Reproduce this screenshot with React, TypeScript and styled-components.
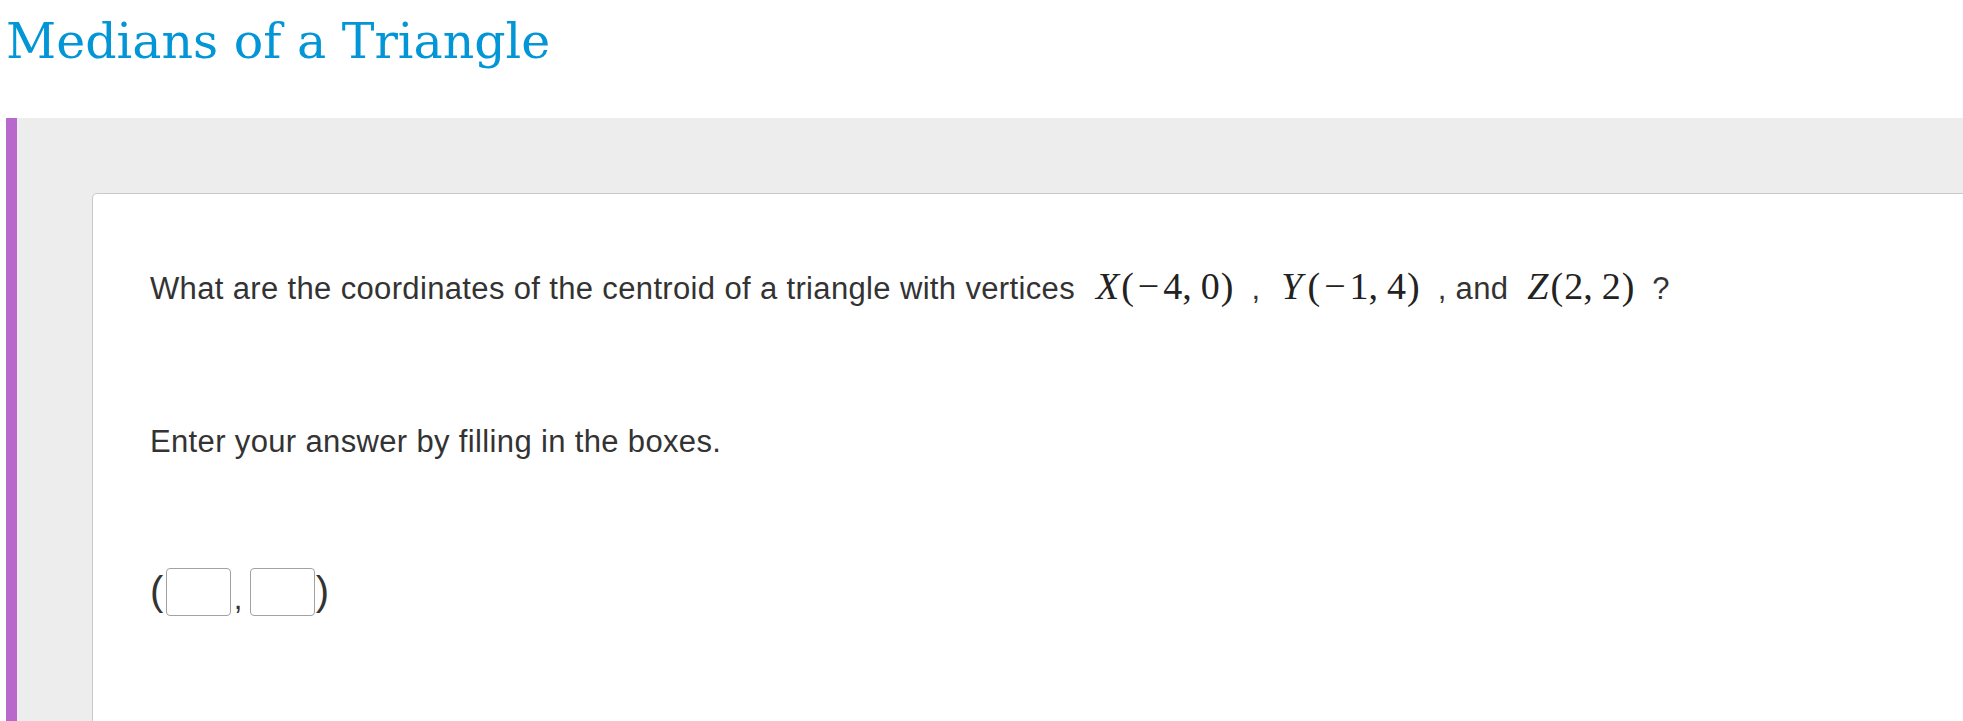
import React from 'react';
import styled, { createGlobalStyle } from 'styled-components';

const GlobalStyle = createGlobalStyle`
  html, body {
    margin: 0;
    padding: 0;
    background: #ffffff;
    overflow: hidden;
  }
`

const Page = styled.div`
  width: 100%;
  min-height: 721px;
`

const Title = styled.h1`
  margin: 0 0 41px 0;
  padding: 7px 0 0 6px;
  font-family: "DejaVu Serif", serif;
  font-weight: normal;
  font-size: 49px;
  line-height: 70px;
  color: #0396d6;
`

const Panel = styled.section`
  margin-left: 6px;
  display: flex;
  background: #ededed;
  border-left: 11px solid #b968cc;
  padding: 75px 0 0 75px;
`

const Card = styled.div`
  flex: 1;
  margin-right: -20px;
  min-height: 700px;
  background: #ffffff;
  border: 1px solid #c9c9c9;
  border-radius: 5px 0 0 0;
  padding: 73px 0 0 57px;
  font-family: "Liberation Sans", Arial, sans-serif;
  font-size: 31px;
  letter-spacing: 0.35px;
  line-height: 44px;
  color: #333333;
`

const Line = styled.p<{ $gap: number }>`
  margin: ${p => p.$gap}px 0 0 0;
  white-space: nowrap;
`

const Math = styled.span<{ $left: number }>`
  display: inline-block;
  margin: 0 8px 0 ${p => p.$left}px;
  font-family: "Liberation Serif", "Times New Roman", serif;
  font-size: 38px;
  letter-spacing: 0;
  line-height: 1;
  color: #222222;
`

const Var = styled.span<{ $pad: number }>`
  font-style: italic;
  padding-right: ${p => p.$pad}px;
`

const Paren = styled.span`
  padding: 0 1px;
`

const Minus = styled.span`
  padding: 0 4px 0 3px;
`

const Sep = styled.span`
  padding-right: 9px;
`

const AnswerRow = styled.div`
  margin-top: 104px;
  display: flex;
  align-items: center;
  height: 48px;
  font-size: 40px;
`

const Bracket = styled.span`
  line-height: 1;
  margin-top: -2px;
`

const Comma = styled.span`
  font-size: 31px;
  line-height: 1;
  margin: 12px 5px 0 2px;
`

const Box = styled.input`
  box-sizing: border-box;
  width: 65px;
  height: 48px;
  margin: 0 1px 0 2px;
  border: 1px solid #a2a2a2;
  border-radius: 4px;
  background: #ffffff;
  outline: none;
  padding: 0;
`

const abs = (v: number) => (v < 0 ? -v : v)

function Point({ name, x, y, left = 12 }: { name: string; x: number; y: number; left?: number }) {
  const num = (v: number) =>
    v < 0 ? (
      <>
        <Minus>−</Minus>
        {abs(v)}
      </>
    ) : (
      <>{v}</>
    )
  return (
    <Math $left={left}>
      <Var $pad={name === 'Y' ? 4 : 1}>{name}</Var>
      <Paren>(</Paren>
      {num(x)}
      <Sep>,</Sep>
      {num(y)}
      <Paren>)</Paren>
    </Math>
  )
}

function App() {
  return (
    <Page>
      <GlobalStyle />
      <Title>Medians of a Triangle</Title>
      <Panel>
        <Card>
          <Line $gap={0}>
            What are the coordinates of the centroid of a triangle with vertices{' '}
            <Point name="X" x={-4} y={0} /> , <Point name="Y" x={-1} y={4} /> , and{' '}
            <Point name="Z" x={2} y={2} left={10} /> ?
          </Line>
          <Line $gap={109}>Enter your answer by filling in the boxes.</Line>
          <AnswerRow>
            <Bracket>(</Bracket>
            <Box aria-label="x coordinate" />
            <Comma>,</Comma>
            <Box aria-label="y coordinate" />
            <Bracket>)</Bracket>
          </AnswerRow>
        </Card>
      </Panel>
    </Page>
  );
}

export default App;
